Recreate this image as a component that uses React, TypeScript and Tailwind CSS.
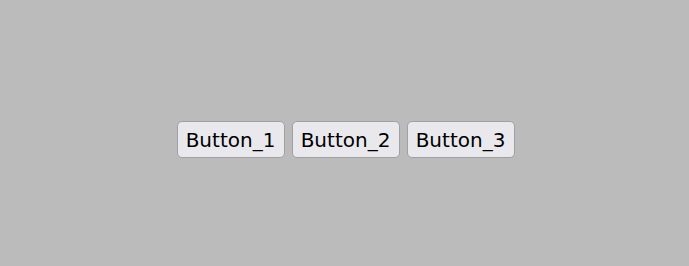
export default function App() {
  const labels = ["Button_1", "Button_2", "Button_3"];
  return (
    <div className="w-[689px] h-[266px] bg-[#bbbbbb] flex items-start justify-center pt-[121px] pl-[2px]">
      <div className="flex gap-[7px]">
        {labels.map((l) => (
          <button
            key={l}
            className="w-[108px] h-[37px] rounded-[5px] border border-[#a0a0a4] bg-[#e9e9ed] text-black text-[20px] leading-none flex items-center justify-center"
            style={{ fontFamily: '"DejaVu Sans", sans-serif' }}
          >
            {l}
          </button>
        ))}
      </div>
    </div>
  );
}
